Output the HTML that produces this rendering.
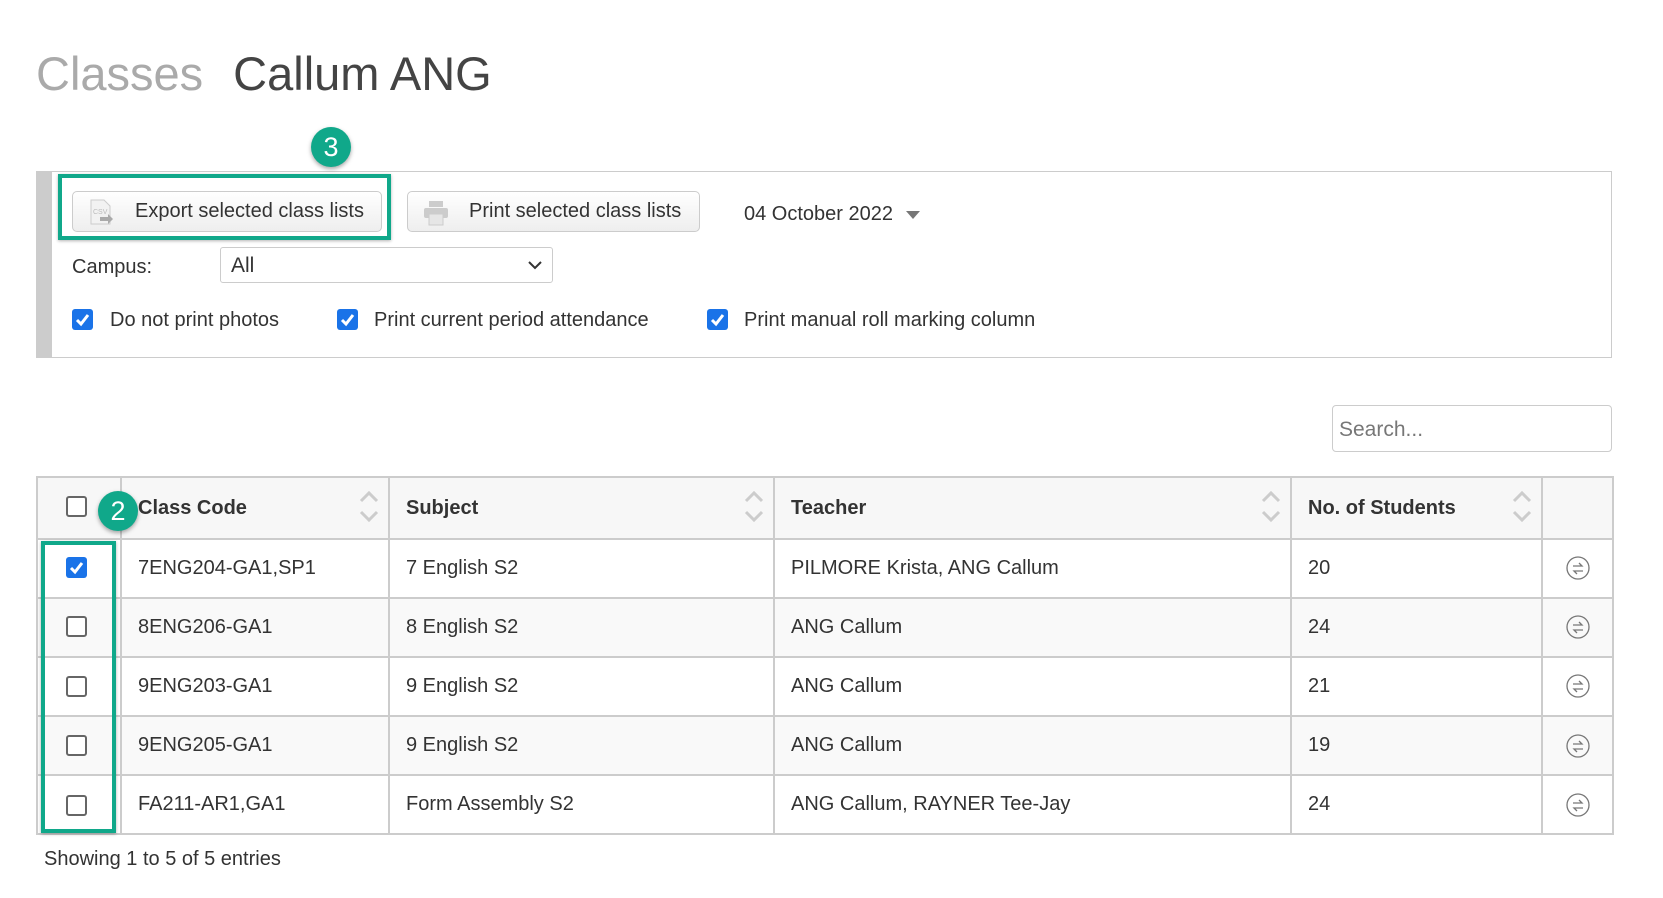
<!DOCTYPE html>
<html><head><meta charset="utf-8"><style>
*{box-sizing:border-box;margin:0;padding:0}
body{width:1663px;height:898px;background:#fff;font-family:"Liberation Sans",sans-serif;color:#333;position:relative;overflow:hidden}
.abs{position:absolute}
h1{position:absolute;left:36px;top:44px;font-weight:normal;font-size:47px;line-height:60px;color:#aaa}
h1 span{color:#444;margin-left:30px}
.panel{left:36px;top:171px;width:1576px;height:187px;border:1px solid #ccc;border-left:16px solid #ccc}
.btn{height:41px;border:1px solid #ccc;border-radius:5px;background:linear-gradient(#fff,#eee);font-size:20px;line-height:39px;color:#333}
.green{border:4px solid #10a88a;box-shadow:0 1px 3px rgba(0,0,0,.3)}
.badge{width:40px;height:40px;border-radius:50%;background:#10a88a;color:#fff;font-size:27px;line-height:40px;text-align:center;box-shadow:0 2px 4px rgba(0,0,0,.35)}
.cb{width:21px;height:21px;border-radius:3px;background:#1a73e8;}
.cb svg{display:block}
.ecb{width:21px;height:21px;border:2px solid #666;border-radius:3px;background:#fff}
.lbl{font-size:20px;line-height:24px}
table{position:absolute;left:36px;top:476px;border-collapse:collapse;font-size:20px}
td,th{border:2px solid #ccc;height:59px;padding:0 0 0 16px;text-align:left;position:relative}
th{background:#f7f7f7;height:62px}
tr.g td{background:#f9f9f9}
</style></head><body>
<h1>Classes<span>Callum ANG</span></h1>
<div class="abs panel"></div>
<div class="abs btn" style="left:72px;top:191px;width:310px;padding-left:62px">Export selected class lists</div>
<svg class="abs" style="left:88px;top:199px" width="26" height="26"><path d="M3 1h13l6 6v18H3z" fill="#f2f2f2" stroke="#ccc"/><text x="5" y="15" font-size="7" fill="#bbb" font-family="Liberation Sans">CSV</text><path d="M12 18h8v-3l5 5-5 5v-3h-8z" fill="#aaa"/></svg>
<div class="abs green" style="left:58px;top:174px;width:333px;height:66px"></div>
<div class="abs badge" style="left:311px;top:127px">3</div>
<div class="abs btn" style="left:407px;top:191px;width:293px;padding-left:61px">Print selected class lists</div>
<svg class="abs" style="left:423px;top:200px" width="26" height="26"><rect x="6" y="1" width="14" height="6" fill="#ccc"/><rect x="1" y="8" width="24" height="10" rx="2" fill="#ccc"/><rect x="6" y="14" width="14" height="11" fill="#e6e6e6" stroke="#ccc"/></svg>
<div class="abs lbl" style="left:744px;top:202px">04 October 2022</div>
<svg class="abs" style="left:906px;top:210px" width="14" height="10"><path d="M0 1h14L7 9z" fill="#777"/></svg>
<div class="abs lbl" style="left:72px;top:255px">Campus:</div>
<div class="abs" style="left:220px;top:247px;width:333px;height:36px;border:1px solid #ccc;border-radius:3px;font-size:21px;line-height:36px;padding-left:10px">All</div>
<svg class="abs" style="left:527px;top:259px" width="16" height="12"><path d="M2 3l6 6 6-6" stroke="#333" stroke-width="2" fill="none"/></svg>
<div class="abs cb" style="left:72px;top:309px"><svg width="21" height="21"><path d="M5 11l4 4 7-9" stroke="#fff" stroke-width="3" fill="none"/></svg></div>
<div class="abs lbl" style="left:110px;top:308px">Do not print photos</div>
<div class="abs cb" style="left:337px;top:309px"><svg width="21" height="21"><path d="M5 11l4 4 7-9" stroke="#fff" stroke-width="3" fill="none"/></svg></div>
<div class="abs lbl" style="left:374px;top:308px">Print current period attendance</div>
<div class="abs cb" style="left:707px;top:309px"><svg width="21" height="21"><path d="M5 11l4 4 7-9" stroke="#fff" stroke-width="3" fill="none"/></svg></div>
<div class="abs lbl" style="left:744px;top:308px">Print manual roll marking column</div>
<div class="abs" style="left:1332px;top:405px;width:280px;height:47px;border:1px solid #ccc;border-radius:4px;font-size:21px;line-height:47px;padding-left:6px;color:#777">Search...</div>
<table>
<tr><th style="width:84px"></th><th style="width:268px">Class Code</th><th style="width:385px">Subject</th><th style="width:517px">Teacher</th><th style="width:251px">No. of Students</th><th style="width:71px"></th></tr>
<tr><td></td><td>7ENG204-GA1,SP1</td><td>7 English S2</td><td>PILMORE Krista, ANG Callum</td><td>20</td><td></td></tr>
<tr class="g"><td></td><td>8ENG206-GA1</td><td>8 English S2</td><td>ANG Callum</td><td>24</td><td></td></tr>
<tr><td></td><td>9ENG203-GA1</td><td>9 English S2</td><td>ANG Callum</td><td>21</td><td></td></tr>
<tr class="g"><td></td><td>9ENG205-GA1</td><td>9 English S2</td><td>ANG Callum</td><td>19</td><td></td></tr>
<tr><td></td><td>FA211-AR1,GA1</td><td>Form Assembly S2</td><td>ANG Callum, RAYNER Tee-Jay</td><td>24</td><td></td></tr>
</table>
<svg class="abs" style="left:0;top:0" width="1663" height="898">
<g stroke="#ccc" stroke-width="3" fill="none">
<path d="M361 501l8-8 8 8M361 512l8 8 8-8"/><path d="M746 501l8-8 8 8M746 512l8 8 8-8"/><path d="M1263 501l8-8 8 8M1263 512l8 8 8-8"/><path d="M1514 501l8-8 8 8M1514 512l8 8 8-8"/>
</g>
<g stroke="#777" stroke-width="1.3" fill="none">
<g transform="translate(1578,568)"><circle r="11"/><path d="M-5 -2h9l-3-3M5 3h-9l3 3"/></g>
<g transform="translate(1578,627)"><circle r="11"/><path d="M-5 -2h9l-3-3M5 3h-9l3 3"/></g>
<g transform="translate(1578,686)"><circle r="11"/><path d="M-5 -2h9l-3-3M5 3h-9l3 3"/></g>
<g transform="translate(1578,746)"><circle r="11"/><path d="M-5 -2h9l-3-3M5 3h-9l3 3"/></g>
<g transform="translate(1578,805)"><circle r="11"/><path d="M-5 -2h9l-3-3M5 3h-9l3 3"/></g>
</g>
</svg>
<div class="abs ecb" style="left:66px;top:496px"></div>
<div class="abs cb" style="left:66px;top:557px"><svg width="21" height="21"><path d="M5 11l4 4 7-9" stroke="#fff" stroke-width="3" fill="none"/></svg></div>
<div class="abs ecb" style="left:66px;top:616px"></div>
<div class="abs ecb" style="left:66px;top:676px"></div>
<div class="abs ecb" style="left:66px;top:735px"></div>
<div class="abs ecb" style="left:66px;top:795px"></div>
<div class="abs green" style="left:41px;top:541px;width:75px;height:292px"></div>
<div class="abs badge" style="left:98px;top:491px">2</div>
<div class="abs lbl" style="left:44px;top:847px">Showing 1 to 5 of 5 entries</div>
</body></html>
